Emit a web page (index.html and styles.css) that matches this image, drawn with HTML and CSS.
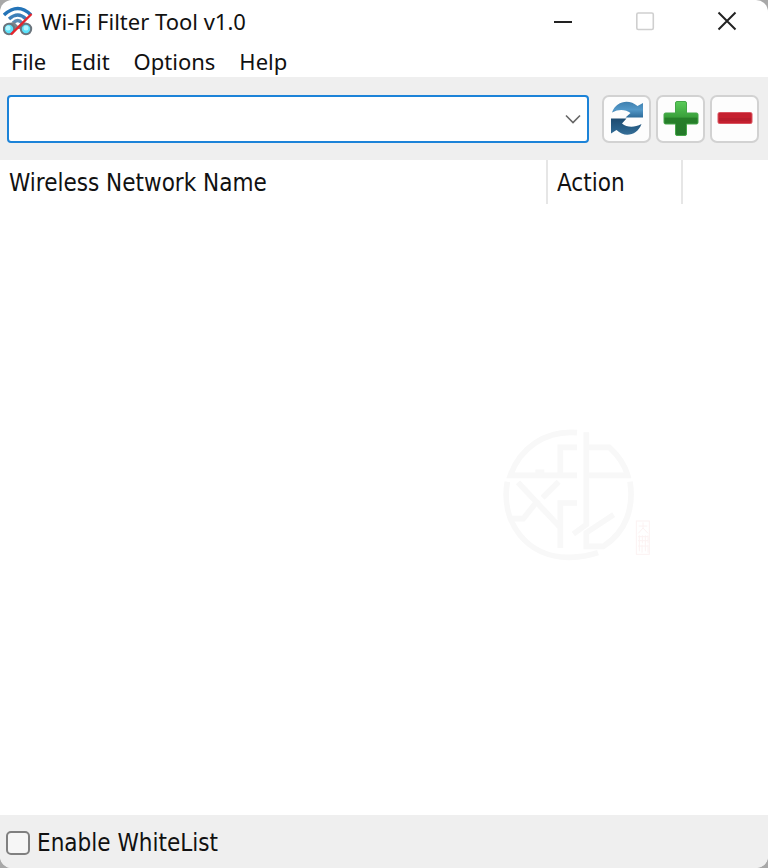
FILE: index.html
```html
<!DOCTYPE html>
<html lang="en">
<head>
<meta charset="utf-8">
<title>Wi-Fi Filter Tool v1.0</title>
<link rel="stylesheet" href="styles.css">
</head>
<body>
<div class="window">
  <header class="titlebar">
    <svg class="app-icon" viewBox="0 0 32 32" aria-hidden="true">
      <g fill="none" stroke="#2474b8" stroke-width="3.4">
        <path d="M1 10Q15 -3 28 10"/>
        <path d="M6 14Q15 6 23 14" stroke="#3d7fb8"/>
        <path d="M10 18Q15 13 19 18" stroke="#5c8db5"/>
      </g>
      <path d="M6 18l5-1 4 4 4-4 5 1v6H6z" fill="#7b858d"/>
      <circle cx="6" cy="24" r="5.200" fill="#5ae2fb" stroke="#6b757d" stroke-width="2"/>
      <circle cx="23" cy="24" r="5.200" fill="#5ae2fb" stroke="#6b757d" stroke-width="2"/>
      <circle cx="5" cy="23" r="2.500" fill="#b4f6ff"/>
      <circle cx="23" cy="23" r="2.500" fill="#b4f6ff"/>
      <path d="M8 29.500L28.500 9" stroke="#e6252c" stroke-width="2.400"/>
    </svg>
    <h1 class="title">Wi-Fi Filter Tool v1.0</h1>
    <div class="window-controls">
      <button type="button" class="window-button" aria-label="Minimize"><svg viewBox="0 0 20 20"><path d="M1 11H19" stroke="#222" stroke-width="2"/></svg></button>
      <button type="button" class="window-button" aria-label="Maximize" disabled><svg viewBox="0 0 20 20"><rect x="1.800" y="2" width="16.500" height="16.500" rx="1.500" fill="none" stroke="#cfcfcf" stroke-width="1.600"/></svg></button>
      <button type="button" class="window-button" aria-label="Close"><svg viewBox="0 0 20 20"><path d="M1.500 1.500L18.500 18.500M18.500 1.500L1.500 18.500" stroke="#222" stroke-width="2"/></svg></button>
    </div>
  </header>
  <nav class="menubar">
    <button type="button">File</button>
    <button type="button">Edit</button>
    <button type="button">Options</button>
    <button type="button">Help</button>
  </nav>
  <div class="toolbar">
    <div class="combo">
      <select class="network-select" aria-label="Network name"><option></option></select>
      <svg class="chevron" viewBox="0 0 16 10" aria-hidden="true"><path d="M1 1.500L8 8.500L15 1.500" fill="none" stroke="#666" stroke-width="1.600"/></svg>
    </div>
    <button type="button" class="tool" aria-label="Refresh">
      <svg viewBox="0 0 36 36">
        <defs>
          <linearGradient id="refresh-top" x1="0" y1="0" x2="0" y2="1"><stop offset="0" stop-color="#3f7fae"/><stop offset=".5" stop-color="#5298c8"/><stop offset="1" stop-color="#2e6b99"/></linearGradient>
          <linearGradient id="refresh-bottom" x1="0" y1="0" x2="0" y2="1"><stop offset="0" stop-color="#1d4b70"/><stop offset=".6" stop-color="#285f88"/><stop offset="1" stop-color="#376f98"/></linearGradient>
        </defs>
        <path d="M3 11.500C7 0 20-2.500 28.500 5L34 2V16.500H16.500L21.500 12C17 8.500 10 7.500 3 11.500Z" fill="url(#refresh-top)"/>
        <path d="M32.500 23C28.500 34 16 37.500 7.500 29L2 32.500V17.500H17.500L13 22.500C18 26.500 25 27 32.500 23Z" fill="url(#refresh-bottom)"/>
      </svg>
    </button>
    <button type="button" class="tool" aria-label="Add">
      <svg viewBox="0 0 36 36">
        <defs><linearGradient id="add-fill" x1="0" y1="0" x2="0" y2="1"><stop offset="0" stop-color="#5acb59"/><stop offset=".45" stop-color="#3aa13b"/><stop offset=".5" stop-color="#267f29"/><stop offset="1" stop-color="#23792a"/></linearGradient></defs>
        <path d="M14 .5H22Q23.500 .5 23.500 2V12H33.500Q35 12 35 13.500V21.500Q35 23 33.500 23H23.500V33Q23.500 34.500 22 34.500H14Q12.500 34.500 12.500 33V23H2.500Q1 23 1 21.500V13.500Q1 12 2.500 12H12.500V2Q12.500 .5 14 .5Z" fill="url(#add-fill)" stroke="#44a648"/>
      </svg>
    </button>
    <button type="button" class="tool" aria-label="Remove">
      <svg viewBox="0 0 36 36">
        <rect x="1" y="11.500" width="34" height="11" rx="1.500" fill="#c5202f" stroke="#d9525e"/>
        <path d="M2 17H34V20H2Z" fill="#b91d2c"/>
      </svg>
    </button>
  </div>
  <main class="list">
    <table class="networks">
      <colgroup><col class="col-name"><col class="col-action"><col></colgroup>
      <thead><tr><th scope="col">Wireless Network Name</th><th scope="col">Action</th><td></td></tr></thead>
    </table>
    <svg class="watermark" viewBox="0 0 510 450" aria-hidden="true">
      <g fill="none" stroke="#f8f8f8" stroke-width="17">
        <path d="M261 38C165 30 90 85 61 166H261M52 185C30 310 115 415 240 412Q285 411 324 398M289 37V314L250 342M211 166V82H261M295 82H358Q400 120 413 166H295M420 185C432 260 410 335 340 379H289V338L371 284"/>
        <path d="M84 187L211 323M206 185L158 233M145 239L100 296H66M211 384V249H261M136 157H163"/>
      </g>
      <g fill="none" stroke="#fcf2f2" stroke-width="3">
        <rect x="439" y="303" width="39" height="100"/>
        <path d="M446 318H472M459 307V324L445 340M459 324L474 340M444 350H474M448 346V394M457 346V370M466 346V394M474 346V370M444 362H474M444 378H474M456 374V398M474 374V398"/>
      </g>
    </svg>
  </main>
  <footer class="statusbar">
    <label class="whitelist"><input type="checkbox">Enable WhiteList</label>
  </footer>
</div>
</body>
</html>
```
FILE: styles.css
```css
* { box-sizing: border-box; }

body {
  margin: 0;
  background: #a8a8a8;
  color: #111;
  font-family: "Noto Sans", "Open Sans", sans-serif;
}

button {
  border: 0;
  padding: 0;
  background: none;
  color: inherit;
  font: inherit;
}

.window {
  display: flex;
  flex-direction: column;
  min-height: 100vh;
  overflow: hidden;
  border-radius: 12px;
  background: #fff;
}

.titlebar {
  display: flex;
  align-items: center;
  height: 42px;
  padding-left: 3px;
}

.app-icon {
  width: 32px;
  height: 32px;
}

.title {
  flex: 1;
  margin: 0 0 0 6px;
  font-size: 22px;
  font-weight: 400;
  line-height: 40px;
}

.window-controls { display: flex; }

.window-button {
  display: grid;
  place-items: center;
  width: 82px;
  height: 42px;
}

.window-button svg {
  width: 20px;
  height: 20px;
}

.menubar {
  display: flex;
  gap: 24px;
  height: 35px;
  padding: 0 11px;
  font-size: 22px;
  line-height: 38px;
}

.toolbar {
  display: flex;
  align-items: center;
  gap: 5px;
  padding: 18px 9px 17px 7px;
  background: #efefef;
}

.combo {
  position: relative;
  flex: 1;
  margin-right: 8px;
}

.network-select {
  display: block;
  width: 100%;
  height: 48px;
  padding: 0 36px 0 10px;
  border: 2px solid #1c83d8;
  border-radius: 4px;
  appearance: none;
  background: #fff;
  font: inherit;
  font-size: 24px;
}

.chevron {
  position: absolute;
  top: 19px;
  right: 8px;
  width: 16px;
  height: 10px;
  pointer-events: none;
}

.tool {
  display: grid;
  place-items: center;
  width: 49px;
  height: 48px;
  border: 2px solid #d2d2d2;
  border-radius: 7px;
  background: #fdfdfd;
}

.tool svg {
  width: 36px;
  height: 36px;
}

.list {
  position: relative;
  flex: 1;
}

.networks {
  width: 100%;
  border-collapse: collapse;
  table-layout: fixed;
}

.col-name { width: 547px; }
.col-action { width: 135px; }

.networks th {
  height: 44px;
  padding: 1px 9px 0;
  border-right: 2px solid #e6e6e6;
  font-family: "DejaVu Sans Condensed", "DejaVu Sans", sans-serif;
  font-size: 24px;
  font-weight: 400;
  text-align: left;
}

.watermark {
  position: absolute;
  top: 260px;
  right: 108px;
  width: 170px;
  height: 150px;
}

.statusbar {
  display: flex;
  align-items: center;
  height: 53px;
  padding: 2px 6px 0;
  background: #efefef;
}

.whitelist {
  display: flex;
  align-items: center;
  gap: 7px;
  font-family: "DejaVu Sans Condensed", "DejaVu Sans", sans-serif;
  font-size: 24px;
}

.whitelist input {
  width: 24px;
  height: 24px;
  margin: 0;
  border: 2px solid #808080;
  border-radius: 5px;
  appearance: none;
  background: #f6f6f6;
}

.whitelist input:checked { background: #1c83d8; }
```
